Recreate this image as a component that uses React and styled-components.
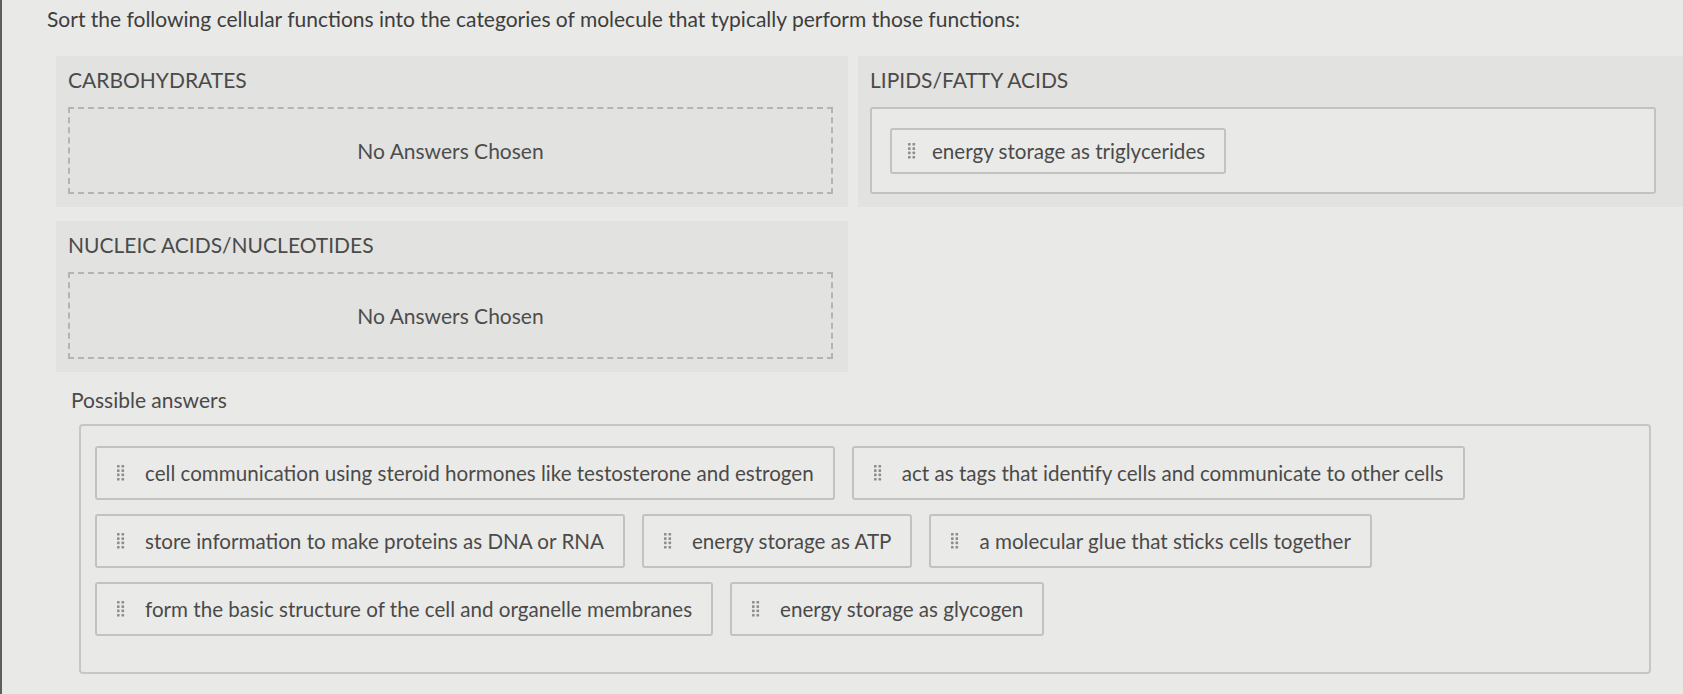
import React from 'react'
import styled, { createGlobalStyle } from 'styled-components'

const GlobalStyle = createGlobalStyle`
  html, body {
    margin: 0;
    padding: 0;
    background: #e9e9e7;
  }
  body {
    font-family: Lato, "Open Sans", "Liberation Sans", sans-serif;
    color: #4a4a4a;
    overflow: hidden;
  }
`

const categories = [
  { title: 'CARBOHYDRATES', items: [] },
  { title: 'LIPIDS/FATTY ACIDS', items: ['energy storage as triglycerides'] },
  { title: 'NUCLEIC ACIDS/NUCLEOTIDES', items: [] },
]

const answers = [
  'cell communication using steroid hormones like testosterone and estrogen',
  'act as tags that identify cells and communicate to other cells',
  'store information to make proteins as DNA or RNA',
  'energy storage as ATP',
  'a molecular glue that sticks cells together',
  'form the basic structure of the cell and organelle membranes',
  'energy storage as glycogen',
]

function Handle() {
  const dots = []
  for (let r = 0; r < 4; r++) {
    for (let c = 0; c < 2; c++) {
      dots.push(<rect key={r + '-' + c} x={c * 4.5} y={r * 4.3} width="2.6" height="2.6" rx="0.6" />)
    }
  }
  return (
    <HandleIcon width="8" height="16" viewBox="0 0 8 16" fill="#8d8d8d">
      {dots}
    </HandleIcon>
  )
}

function Chip({ text, small }) {
  return (
    <ChipBox small={small}>
      <Handle />
      <span>{text}</span>
    </ChipBox>
  )
}

function App() {
  return (
    <Page>
      <GlobalStyle />
      <Title>Sort the following cellular functions into the categories of molecule that typically perform those functions:</Title>
      <Categories>
        {categories.map((cat) => (
          <Panel key={cat.title}>
            <Label>{cat.title}</Label>
            {cat.items.length === 0 ? (
              <DropZone>No Answers Chosen</DropZone>
            ) : (
              <FilledZone>
                {cat.items.map((item) => (
                  <Chip key={item} text={item} small />
                ))}
              </FilledZone>
            )}
          </Panel>
        ))}
      </Categories>
      <AnswersSection>
        <AnswersLabel>Possible answers</AnswersLabel>
        <AnswersBox>
          {answers.map((a) => (
            <Chip key={a} text={a} />
          ))}
        </AnswersBox>
      </AnswersSection>
    </Page>
  )
}

const Page = styled.div`
  min-height: 694px;
  border-left: 2px solid #5e5e5c;
  box-sizing: border-box;
`

const Title = styled.h1`
  margin: 0;
  padding: 7px 0 0 45px;
  font-size: 21px;
  line-height: 24px;
  font-weight: 400;
  color: #3d3d3d;
`

const Categories = styled.div`
  display: grid;
  grid-template-columns: 792px 1fr;
  column-gap: 10px;
  row-gap: 14px;
  margin-top: 25px;
  padding-left: 54px;
`

const Panel = styled.div`
  background: #e2e2e0;
  padding: 12px 15px 13px 12px;
`

const Label = styled.div`
  font-size: 21px;
  line-height: 24px;
  color: #4a4a4a;
  margin-bottom: 15px;
`

const DropZone = styled.div`
  height: 87px;
  border: 2px dashed #b4b4b2;
  display: flex;
  align-items: center;
  justify-content: center;
  font-size: 21px;
  color: #4d4d4d;
  box-sizing: border-box;
`

const FilledZone = styled.div`
  height: 87px;
  border: 2px solid #c2c2c0;
  border-radius: 3px;
  background: #e9e9e7;
  display: flex;
  align-items: center;
  padding: 0 18px;
  box-sizing: border-box;
  margin-right: 12px;
`

const AnswersSection = styled.div`
  padding: 16px 32px 0 69px;
`

const AnswersLabel = styled.div`
  font-size: 21px;
  line-height: 24px;
  color: #4a4a4a;
  margin-bottom: 12px;
`

const AnswersBox = styled.div`
  margin-left: 8px;
  border: 2px solid #c6c6c4;
  border-radius: 4px;
  padding: 20px 14px 36px;
  display: flex;
  flex-wrap: wrap;
  align-items: center;
  gap: 14px 17px;
`

const ChipBox = styled.div`
  display: flex;
  align-items: center;
  height: ${(p) => (p.small ? '46px' : '54px')};
  padding: 0 19px 0 ${(p) => (p.small ? '16px' : '20px')};
  gap: ${(p) => (p.small ? '16px' : '20px')};
  border: 2px solid #c2c2c0;
  border-radius: 3px;
  background: #eaeae8;
  box-sizing: border-box;
  font-size: 20.6px;
  color: #4a4a4a;
  white-space: nowrap;
`

const HandleIcon = styled.svg`
  flex-shrink: 0;
`

export default App
